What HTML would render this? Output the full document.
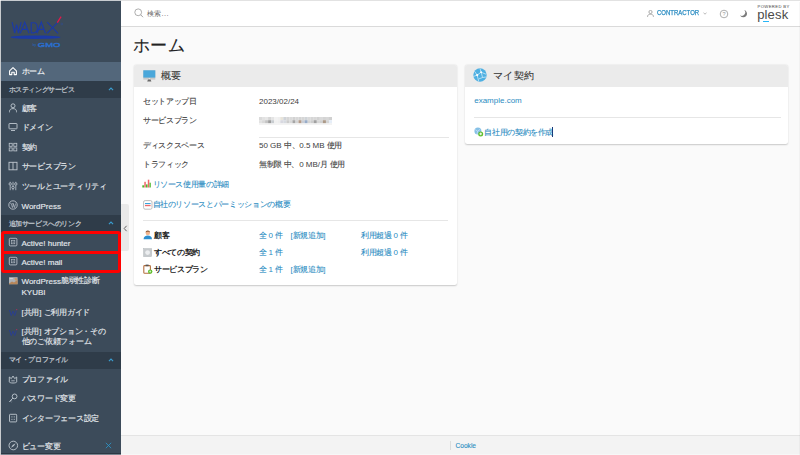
<!DOCTYPE html>
<html><head><meta charset="utf-8">
<style>
*{box-sizing:border-box;margin:0;padding:0}
html,body{width:800px;height:455px;overflow:hidden;background:#cbcbcb;font-family:"Liberation Sans",sans-serif}
.abs{position:absolute;white-space:nowrap}
#frame{position:absolute;left:1px;top:1px;width:799px;height:454px;background:#fafafa;overflow:hidden}
#side{position:absolute;left:0;top:0;width:120px;height:454px;background:#3c4b5a;color:#e6eaee}
.it{position:absolute;left:0;width:120px;height:19.4px;font-size:8px;letter-spacing:-0.25px;line-height:21px;padding-left:20.5px;color:#e4e8ec;-webkit-text-stroke:0.15px #e4e8ec}
.it .la{font-size:8px;letter-spacing:0;position:relative;top:1px}
.it .br{font-size:8px;letter-spacing:0}
.it svg{position:absolute;left:6.9px;top:5.1px;width:10px;height:10px;overflow:visible}
.sec{position:absolute;left:0;width:120px;height:17px;background:#2f3c49;font-size:7px;letter-spacing:-0.4px;line-height:17px;padding-left:7.5px;color:#c6cdd4;-webkit-text-stroke:0.2px #c6cdd4}
.sec svg{position:absolute;left:106.6px;top:6px}
#hdr{position:absolute;left:120px;top:0;width:679px;height:26px;background:#fff;border-bottom:1px solid #dadada}
.card{position:absolute;background:#fff;border-radius:2.5px;box-shadow:0 0.6px 1.6px rgba(0,0,0,.2)}
.card .ch{position:absolute;left:0;top:0;right:0;height:22.5px;background:#ebebeb;border-radius:2.5px 2.5px 0 0}
.t{position:absolute;white-space:nowrap;font-size:8px;letter-spacing:-0.35px;line-height:10px;color:#404040;-webkit-text-stroke:0.1px #404040}
.t .la{font-size:8px;letter-spacing:0;-webkit-text-stroke:0}
.lnk{color:#2a8cc2;-webkit-text-stroke:0.1px #2a8cc2}
.b{font-weight:bold;color:#222;-webkit-text-stroke:0}
</style></head><body>
<div class="abs" style="left:0;top:0;width:800px;height:1px;background:#e2e2e2"></div>
<div class="abs" style="left:1px;top:0;width:120px;height:1px;background:#c8ccd0"></div>
<div class="abs" style="left:0;top:1px;width:1px;height:454px;background:#c8cbce"></div>
<div class="abs" style="left:0;top:0;width:1px;height:1px;background:#ececec"></div>
<div id="frame">
  <div id="side">
    <!-- logo -->
    <svg class="abs" style="left:8px;top:14px" width="56" height="34" viewBox="0 0 56 34">
      <g fill="none" stroke="#1c3aa6" stroke-width="1.15" stroke-linejoin="miter">
        <path d="M3.1 7.2 5.7 18.2 7.6 9.6 9.5 18.2 12.1 7.2"/>
        <path d="M11.3 18.3 15.7 7.2 20.1 18.3M13.1 14.4H18.3"/>
        <path d="M22.2 7.7V17.8H24.6C27.6 17.8 28.4 15.3 28.4 12.75S27.6 7.7 24.6 7.7Z"/>
        <path d="M28.1 18.3 32.3 7.2 36.5 18.3M29.9 14.4H34.8"/>
        <path d="M38.2 7.2 49 18.3M48.4 7.6 38 18.3"/>
      </g>
      <path d="M48.3 7.6 52.1 1.6" stroke="#e3174b" stroke-width="1.3"/>
      <circle cx="52.8" cy="9" r="0.9" fill="none" stroke="#2a4ab0" stroke-width="0.35"/>
      <ellipse cx="26.5" cy="22.2" rx="25" ry="1.8" fill="#1c3aa6"/>
      <text x="23.8" y="30.6" font-family="Liberation Sans" font-size="3.2" fill="#2367c8">by</text>
      <text x="28.8" y="31.6" font-family="Liberation Sans" font-size="6.2" fill="#2a6fd0" stroke="#2a6fd0" stroke-width="0.35" textLength="22.6" lengthAdjust="spacingAndGlyphs">GMO</text>
    </svg>
    <div class="it" style="top:61px;height:19px;line-height:20px;background:#53677b;color:#fff">ホーム
      <svg viewBox="0 0 10 10" style="top:4.3px"><path d="M1.6 4.8 5 1.6 8.4 4.8V8.6H6.2V6.2H3.8V8.6H1.6Z" fill="none" stroke="#fff" stroke-width="1.1" stroke-linejoin="round"/></svg></div>
    <div class="sec" style="top:80px">ホスティングサービス<svg width="6" height="4" viewBox="0 0 6 4"><path d="M0.9 3.1 3 1.1 5.1 3.1" fill="none" stroke="#3a9fd2" stroke-width="1.1"/></svg></div>
    <div class="it" style="top:97px">顧客
      <svg viewBox="0 0 10 10"><circle cx="5" cy="2.8" r="2" fill="none" stroke="#c0c8d0" stroke-width="0.9"/><path d="M1.5 9.3V8.4C1.5 6.6 3 5.6 5 5.6S8.5 6.6 8.5 8.4V9.3" fill="none" stroke="#c0c8d0" stroke-width="0.9"/></svg></div>
    <div class="it" style="top:116.4px">ドメイン
      <svg viewBox="0 0 10 10"><rect x="1" y="1.5" width="8" height="5.3" rx="0.5" fill="none" stroke="#c0c8d0" stroke-width="0.9"/><path d="M3 8.5H7" stroke="#c0c8d0" stroke-width="0.9"/></svg></div>
    <div class="it" style="top:135.8px">契約
      <svg viewBox="0 0 10 10"><g fill="none" stroke="#c0c8d0" stroke-width="0.8"><rect x="1.2" y="1.3" width="3" height="3"/><rect x="5.8" y="1.3" width="3" height="3"/><rect x="1.2" y="5.9" width="3" height="3"/><rect x="5.8" y="5.9" width="3" height="3"/></g></svg></div>
    <div class="it" style="top:155.2px">サービスプラン
      <svg viewBox="0 0 10 10"><g fill="none" stroke="#c0c8d0" stroke-width="0.9"><rect x="1" y="1.3" width="8" height="7.5"/><path d="M5 1.3V8.8"/></g></svg></div>
    <div class="it" style="top:174.6px">ツールとユーティリティ
      <svg viewBox="0 0 10 10"><g stroke="#c0c8d0" stroke-width="0.8"><path d="M2.2 4.3V9.2M2.2 0.8V1.8M5 0.8V5.2M5 7.8V9.2M7.8 4.3V9.2M7.8 0.8V1.8"/><circle cx="2.2" cy="3" r="1.2" fill="none"/><circle cx="5" cy="6.5" r="1.2" fill="none"/><circle cx="7.8" cy="3" r="1.2" fill="none"/></g></svg></div>
    <div class="it" style="top:194px"><span class="la">WordPress</span>
      <svg viewBox="0 0 10 10"><circle cx="5" cy="5" r="4.2" fill="none" stroke="#c0c8d0" stroke-width="0.85"/><path d="M2.3 3.6H3.3L4.4 7.6 5.3 5 4.8 3.6M4.3 3.6H5.6M5.3 3.6 6.4 7.6 7.5 4.2C7.7 3.7 7.6 3.6 7.4 3.5" fill="none" stroke="#c0c8d0" stroke-width="0.65"/></svg></div>
    <div class="sec" style="top:213.6px">追加サービスへのリンク<svg width="6" height="4" viewBox="0 0 6 4"><path d="M0.9 3.1 3 1.1 5.1 3.1" fill="none" stroke="#3a9fd2" stroke-width="1.1"/></svg></div>
    <div class="it" style="top:230.6px"><span class="la">Active! hunter</span>
      <svg viewBox="0 0 10 10"><rect x="1.3" y="1.3" width="7.6" height="7.6" rx="1" fill="none" stroke="#b8c0c8" stroke-width="0.9"/><rect x="3.4" y="3.4" width="3.4" height="3.4" fill="none" stroke="#b8c0c8" stroke-width="0.6"/><circle cx="5.1" cy="5.1" r="0.6" fill="#b8c0c8"/></svg></div>
    <div class="it" style="top:250px"><span class="la">Active! mail</span>
      <svg viewBox="0 0 10 10"><rect x="1.3" y="1.3" width="7.6" height="7.6" rx="1" fill="none" stroke="#b8c0c8" stroke-width="0.9"/><rect x="3.4" y="3.4" width="3.4" height="3.4" fill="none" stroke="#b8c0c8" stroke-width="0.6"/><circle cx="5.1" cy="5.1" r="0.6" fill="#b8c0c8"/></svg></div>
    <div class="it" style="top:269.4px;height:31.2px;line-height:10.4px;padding-top:6px"><span class="la">WordPress</span>脆弱性診断<br><span class="la">KYUBI</span>
      <svg viewBox="0 0 10 10" style="top:5.5px"><rect x="1" y="1.2" width="8.6" height="7" fill="#aeb3b8"/><path d="M1 7.6 4 5.6 6 6.6 9.6 3.8V8.2H1Z" fill="#b8875a"/><path d="M6.5 2 8.5 1.7 9.6 4.2 7 4.6Z" fill="#c49a6a"/><rect x="1.8" y="2.2" width="3" height="0.8" fill="#d6d9dc"/></svg></div>
    <div class="it" style="top:300.6px"><span class="br">[</span>共用<span class="br">]&nbsp;</span>ご利用ガイド
      <svg viewBox="0 0 10 10"><path d="M1.5 3 3.2 8.6 5 4.2 6.8 8.6 8.3 3.4" fill="none" stroke="#2a3f8e" stroke-width="1"/><circle cx="8.7" cy="2.6" r="0.7" fill="#a8305a"/></svg></div>
    <div class="it" style="top:320px;height:31.2px;line-height:10.4px;padding-top:6px"><span class="br">[</span>共用<span class="br">]&nbsp;</span>オプション・その<br>他のご依頼フォーム
      <svg viewBox="0 0 10 10" style="top:6px"><path d="M1.5 3 3.2 8.6 5 4.2 6.8 8.6 8.3 3.4" fill="none" stroke="#2a3f8e" stroke-width="1"/><circle cx="8.7" cy="2.6" r="0.7" fill="#a8305a"/></svg></div>
    <div class="sec" style="top:351.2px;height:16.5px;line-height:16.5px">マイ・プロファイル<svg width="6" height="4" viewBox="0 0 6 4"><path d="M0.9 3.1 3 1.1 5.1 3.1" fill="none" stroke="#3a9fd2" stroke-width="1.1"/></svg></div>
    <div class="it" style="top:367.7px">プロファイル
      <svg viewBox="0 0 10 10"><path d="M1.3 3 3.3 4.6 5 2 6.7 4.6 8.7 3V7.8C8.7 8.6 7 9 5 9S1.3 8.6 1.3 7.8Z" fill="none" stroke="#c0c8d0" stroke-width="0.9" stroke-linejoin="round"/><path d="M3.3 6.8H6.7" stroke="#c0c8d0" stroke-width="0.8"/></svg></div>
    <div class="it" style="top:387.1px">パスワード変更
      <svg viewBox="0 0 10 10"><circle cx="6.6" cy="3.4" r="2.4" fill="none" stroke="#c0c8d0" stroke-width="0.9"/><path d="M4.9 5.1 1.2 8.8M2.2 7.8 3.3 8.9M3.2 6.8 4.1 7.7" fill="none" stroke="#c0c8d0" stroke-width="0.9"/></svg></div>
    <div class="it" style="top:406.5px">インターフェース設定
      <svg viewBox="0 0 10 10"><rect x="1.5" y="1.3" width="7.2" height="7.6" rx="0.8" fill="none" stroke="#c0c8d0" stroke-width="0.9"/><path d="M3.2 3.9H4.6M5.6 3.9H7M3.2 6.3H4.6M5.6 6.3H7" fill="none" stroke="#c0c8d0" stroke-width="0.75"/></svg></div>
    <div class="it" style="top:435px">ビュー変更
      <svg viewBox="0 0 10 10" style="top:4.2px"><circle cx="5.3" cy="5.5" r="4.3" fill="none" stroke="#c0c8d0" stroke-width="0.9"/><path d="M7.6 3.2 5.9 6.1 3 7.8 4.7 4.9Z" fill="#c0c8d0"/></svg>
      <svg viewBox="0 0 10 10" style="left:103.5px;top:6.2px;width:7px;height:7px"><path d="M1.2 1.2 8.8 8.8M8.8 1.2 1.2 8.8" stroke="#2a9bd2" stroke-width="1.1"/></svg></div>
    <div class="abs" style="left:0;top:452px;width:120px;height:1px;background:#2c3844"></div>
  </div>
  <!-- red highlight boxes -->
  <div class="abs" style="left:0.2px;top:229.9px;width:119.6px;height:22.8px;border:3px solid #f00;border-radius:3px"></div>
  <div class="abs" style="left:0.2px;top:249.6px;width:119.6px;height:22.6px;border:3px solid #f00;border-radius:3px"></div>

  <!-- collapse tab -->
  <div class="abs" style="left:120px;top:203px;width:8px;height:47px;background:#e9e9e9;border-radius:0 2px 2px 0"></div>
  <svg class="abs" style="left:122px;top:224px" width="5" height="7" viewBox="0 0 5 7"><path d="M3.6 0.8 1.2 3.5 3.6 6.2" fill="none" stroke="#555" stroke-width="0.9"/></svg>

  <!-- header -->
  <div id="hdr">
    <svg class="abs" style="left:13px;top:7px" width="10" height="10" viewBox="0 0 10 10"><circle cx="4.2" cy="4.3" r="3.4" fill="none" stroke="#999" stroke-width="0.8"/><path d="M6.7 6.8 9 9.2" stroke="#999" stroke-width="0.9"/></svg>
    <div class="abs" style="left:25.8px;top:7.8px;font-size:7.4px;letter-spacing:0.4px;line-height:10px;color:#6f6f6f">検索...</div>
    <svg class="abs" style="left:526px;top:9px" width="7" height="7" viewBox="0 0 7 7"><circle cx="3.5" cy="2" r="1.6" fill="none" stroke="#888" stroke-width="0.7"/><path d="M0.6 7V6.4C0.6 5 1.8 4.2 3.5 4.2S6.4 5 6.4 6.4V7" fill="none" stroke="#888" stroke-width="0.7"/></svg>
    <div class="abs" style="left:535.7px;top:8.2px;font-size:6.7px;line-height:8px;color:#2a8cc2;-webkit-text-stroke:0.25px #2a8cc2;transform:scaleX(0.895);transform-origin:0 0">CONTRACTOR</div>
    <svg class="abs" style="left:582px;top:11px" width="4" height="3" viewBox="0 0 4 3"><path d="M0.5 0.8 2 2.2 3.5 0.8" fill="none" stroke="#888" stroke-width="0.6"/></svg>
    <svg class="abs" style="left:598px;top:8px" width="10" height="10" viewBox="0 0 10 10"><circle cx="5" cy="5" r="3.8" fill="none" stroke="#999" stroke-width="0.8"/><text x="5" y="7" text-anchor="middle" font-family="Liberation Sans" font-size="5.5" fill="#999">?</text></svg>
    <svg class="abs" style="left:617.5px;top:7.5px" width="9" height="9" viewBox="0 0 9 9"><path d="M5.2 1A3.7 3.7 0 1 1 1 6.3 3.4 3.4 0 0 0 5.2 1Z" fill="#7a7a7a"/></svg>
    <div class="abs" style="left:636.5px;top:4px;font-size:4.2px;line-height:4px;letter-spacing:0.38px;color:#444">POWERED BY</div>
    <div class="abs" style="left:636.2px;top:5.3px;font-size:13px;line-height:18px;letter-spacing:0.15px;color:#4a4a4a">plesk</div>
    <div class="abs" style="left:642px;top:19.8px;width:6px;height:1.2px;background:#29b6f6"></div>
  </div>

  <!-- title -->
  <div class="abs" style="left:132px;top:34px;font-size:17px;letter-spacing:0.3px;line-height:22px;color:#222;-webkit-text-stroke:0.1px #222">ホーム</div>

  <!-- left card -->
  <div class="card" style="left:132.5px;top:63.7px;width:323.3px;height:220.3px">
    <div class="ch"></div>
    <svg class="abs" style="left:9.5px;top:5.5px" width="13" height="13" viewBox="0 0 13 13"><rect x="0.3" y="0.3" width="12" height="9.3" fill="#c9c9c9"/><rect x="0.3" y="0.3" width="12" height="7.3" fill="#4aa7da"/><circle cx="6.3" cy="8.6" r="0.5" fill="#eee"/><path d="M5 9.6H7.6L8.4 11.6H4.2Z" fill="#6a6a6a"/></svg>
    <div class="abs" style="left:27px;top:4px;font-size:10px;letter-spacing:0.5px;line-height:14px;color:#333;-webkit-text-stroke:0.1px #333">概要</div>

    <div class="t" style="left:9.5px;top:32px">セットアップ日</div>
    <div class="t" style="left:125.5px;top:32px"><span class="la">2023/02/24</span></div>
    <div class="t" style="left:9.5px;top:51.5px">サービスプラン</div>
    <svg class="abs" style="left:125.2px;top:52.2px;filter:blur(0.45px)" width="73" height="8" viewBox="0 0 73 8"><rect x="0.00" y="0" width="3.09" height="3.2" fill="#dadada"/><rect x="0.00" y="3.2" width="3.09" height="3.2" fill="#e2e2e2"/><rect x="3.04" y="0" width="3.09" height="3.2" fill="#e2e2e2"/><rect x="3.04" y="3.2" width="3.09" height="3.2" fill="#d8d8d8"/><rect x="6.08" y="0" width="3.09" height="3.2" fill="#e6e6e6"/><rect x="6.08" y="3.2" width="3.09" height="3.2" fill="#c4c4c4"/><rect x="9.12" y="0" width="3.09" height="3.2" fill="#d6d6d6"/><rect x="9.12" y="3.2" width="3.09" height="3.2" fill="#9c9c9c"/><rect x="12.17" y="0" width="3.09" height="3.2" fill="#e4e4e4"/><rect x="12.17" y="3.2" width="3.09" height="3.2" fill="#c8ccd0"/><rect x="15.21" y="0" width="3.09" height="3.2" fill="#f2f2f2"/><rect x="15.21" y="3.2" width="3.09" height="3.2" fill="#f0f0f0"/><rect x="18.25" y="0" width="3.09" height="3.2" fill="#efefef"/><rect x="18.25" y="3.2" width="3.09" height="3.2" fill="#eeeeee"/><rect x="21.29" y="0" width="3.09" height="3.2" fill="#e8e4da"/><rect x="21.29" y="3.2" width="3.09" height="3.2" fill="#d8d8e0"/><rect x="24.33" y="0" width="3.09" height="3.2" fill="#cfd3d8"/><rect x="24.33" y="3.2" width="3.09" height="3.2" fill="#d6dae0"/><rect x="27.38" y="0" width="3.09" height="3.2" fill="#d6d6d6"/><rect x="27.38" y="3.2" width="3.09" height="3.2" fill="#cccccc"/><rect x="30.42" y="0" width="3.09" height="3.2" fill="#dadada"/><rect x="30.42" y="3.2" width="3.09" height="3.2" fill="#d8d8d8"/><rect x="33.46" y="0" width="3.09" height="3.2" fill="#d2d2d2"/><rect x="33.46" y="3.2" width="3.09" height="3.2" fill="#a6a6a6"/><rect x="36.50" y="0" width="3.09" height="3.2" fill="#d8d8d8"/><rect x="36.50" y="3.2" width="3.09" height="3.2" fill="#d4d4d4"/><rect x="39.54" y="0" width="3.09" height="3.2" fill="#d4d4d4"/><rect x="39.54" y="3.2" width="3.09" height="3.2" fill="#b49c8a"/><rect x="42.58" y="0" width="3.09" height="3.2" fill="#d6d6d6"/><rect x="42.58" y="3.2" width="3.09" height="3.2" fill="#c8ccd4"/><rect x="45.62" y="0" width="3.09" height="3.2" fill="#d0d4d8"/><rect x="45.62" y="3.2" width="3.09" height="3.2" fill="#98acc8"/><rect x="48.67" y="0" width="3.09" height="3.2" fill="#dadada"/><rect x="48.67" y="3.2" width="3.09" height="3.2" fill="#d4d4d4"/><rect x="51.71" y="0" width="3.09" height="3.2" fill="#d6d6d6"/><rect x="51.71" y="3.2" width="3.09" height="3.2" fill="#cccccc"/><rect x="54.75" y="0" width="3.09" height="3.2" fill="#d8d8d8"/><rect x="54.75" y="3.2" width="3.09" height="3.2" fill="#a0a0a0"/><rect x="57.79" y="0" width="3.09" height="3.2" fill="#d2d2d2"/><rect x="57.79" y="3.2" width="3.09" height="3.2" fill="#d6d6d6"/><rect x="60.83" y="0" width="3.09" height="3.2" fill="#dadada"/><rect x="60.83" y="3.2" width="3.09" height="3.2" fill="#d0d0d0"/><rect x="63.88" y="0" width="3.09" height="3.2" fill="#d4d4d4"/><rect x="63.88" y="3.2" width="3.09" height="3.2" fill="#ac9a88"/><rect x="66.92" y="0" width="3.09" height="3.2" fill="#d8d8d8"/><rect x="66.92" y="3.2" width="3.09" height="3.2" fill="#d4d4d4"/><rect x="69.96" y="0" width="3.09" height="3.2" fill="#d0d0d0"/><rect x="69.96" y="3.2" width="3.09" height="3.2" fill="#e6eef8"/><rect x="0" y="6.4" width="73" height="1.4" fill="#f1f1f1"/></svg>
    <div class="abs" style="left:125.5px;top:72.5px;width:190px;height:1px;background:#e6e6e6"></div>
    <div class="t" style="left:9.5px;top:76.5px">ディスクスペース</div>
    <div class="t" style="left:125.5px;top:76.5px"><span class="la">50 GB </span>中、<span class="la">0.5 MB </span>使用</div>
    <div class="t" style="left:9.5px;top:95px">トラフィック</div>
    <div class="t" style="left:125.5px;top:95px">無制限 中、<span class="la">0 MB/</span>月 使用</div>

    <svg class="abs" style="left:8.6px;top:114.6px" width="10" height="10" viewBox="0 0 10 10"><rect x="0.3" y="6.3" width="1.8" height="2.2" fill="#4cb82e"/><rect x="2.3" y="2.8" width="1.5" height="5.7" fill="#ee6a6a"/><rect x="4" y="5.4" width="1.6" height="3.1" fill="#4cb82e"/><rect x="5.8" y="0.7" width="1.5" height="7.8" fill="#ee6a6a"/><rect x="7.5" y="3.7" width="1.3" height="4.8" fill="#4cb82e"/></svg>
    <div class="t lnk" style="left:19px;top:115.5px">リソース使用量の詳細</div>
    <svg class="abs" style="left:9.5px;top:135px" width="10" height="10" viewBox="0 0 10 10"><rect x="0.6" y="0.6" width="8.4" height="8.6" rx="1.5" fill="#fff" stroke="#b5b5b5" stroke-width="0.9"/><rect x="2" y="3" width="5.6" height="1.1" fill="#39a3dd"/><rect x="2" y="4.9" width="5.6" height="1.3" fill="#ee6a6a"/></svg>
    <div class="t lnk" style="left:19px;top:135px">自社のリソースとパーミッションの概要</div>
    <div class="abs" style="left:9.5px;top:155.5px;width:305px;height:1px;background:#e6e6e6"></div>

    <svg class="abs" style="left:9px;top:165.8px" width="10" height="10" viewBox="0 0 10 10"><circle cx="4.8" cy="2.9" r="2.2" fill="#f2b48c"/><path d="M4.8 0.6C3 0.6 2.6 1.8 2.7 2.6 3.4 1.6 6.2 1.6 6.9 2.6 7 1.8 6.6 0.6 4.8 0.6Z" fill="#8a5a3a"/><path d="M0.6 9.2C0.6 6.8 2.4 5.6 4.8 5.6S9 6.8 9 9.2Z" fill="#2c8fd0"/></svg>
    <div class="t b" style="left:20.5px;top:166px">顧客</div>
    <div class="t lnk" style="left:125.5px;top:166px">全 <span class="la">0</span> 件</div><div class="t lnk" style="left:157px;top:166px"><span class="la">[</span>新規追加<span class="la">]</span></div>
    <div class="t lnk" style="left:227.5px;top:166px">利用超過 <span class="la">0</span> 件</div>

    <svg class="abs" style="left:9px;top:183.3px" width="10" height="10" viewBox="0 0 10 10"><rect x="0.6" y="0.6" width="8" height="8" fill="#c6cacd" stroke="#b0b5ba" stroke-width="0.5"/><circle cx="4.6" cy="4.6" r="2.4" fill="#eceef0"/></svg>
    <div class="t b" style="left:20.5px;top:183.5px">すべての契約</div>
    <div class="t lnk" style="left:125.5px;top:183.5px">全 <span class="la">1</span> 件</div>
    <div class="t lnk" style="left:227.5px;top:183.5px">利用超過 <span class="la">0</span> 件</div>

    <svg class="abs" style="left:9px;top:199.3px" width="10" height="10" viewBox="0 0 10 10"><rect x="0.8" y="1.6" width="6.6" height="7.6" rx="0.8" fill="#fff" stroke="#b56f3e" stroke-width="1.1"/><rect x="2.6" y="0.6" width="3" height="1.6" fill="#555"/><circle cx="7.2" cy="7.6" r="2.2" fill="#5cbf2a"/><path d="M7.2 6.4V8.6M6.3 7.6H8.1" stroke="#fff" stroke-width="0.6"/></svg>
    <div class="t b" style="left:20.5px;top:200.5px">サービスプラン</div>
    <div class="t lnk" style="left:125.5px;top:200.5px">全 <span class="la">1</span> 件</div><div class="t lnk" style="left:157px;top:200.5px"><span class="la">[</span>新規追加<span class="la">]</span></div>
  </div>

  <!-- right card -->
  <div class="card" style="left:464.3px;top:63.7px;width:323.2px;height:79.3px">
    <div class="ch"></div>
    <svg class="abs" style="left:8.2px;top:3.8px" width="14" height="14" viewBox="0 0 14 14"><circle cx="7" cy="7" r="6.7" fill="#4fb0e2"/><g stroke="#eaf6fc" stroke-width="0.65" fill="none"><path d="M1.6 3.4 4.2 7.1 8.1 4.2 7 0.6M8.1 4.2 12.9 6.2M4.2 7.1 5.6 13.2M4.2 7.1 0.6 8.4M8.1 4.2 9.6 9.5 5.6 11M9.6 9.5 13 9"/></g><circle cx="4.2" cy="7.1" r="1.1" fill="#fff"/><circle cx="8.1" cy="4.2" r="0.9" fill="#fff"/></svg>
    <div class="abs" style="left:27.5px;top:4px;font-size:10px;letter-spacing:0.5px;line-height:14px;color:#333;-webkit-text-stroke:0.1px #333">マイ契約</div>
    <div class="t lnk" style="left:8.9px;top:31px"><span class="la">example.com</span></div>
    <div class="abs" style="left:8.3px;top:52.8px;width:307px;height:1px;background:#e6e6e6"></div>
    <svg class="abs" style="left:8.5px;top:62.8px" width="10" height="10" viewBox="0 0 10 10"><circle cx="3.9" cy="3.9" r="3.5" fill="#86c0e6"/><path d="M1.3 2.6 3.6 4.2 6.2 2.2M3.6 4.2 3 7.3" stroke="#e8f4fb" stroke-width="0.5" fill="none"/><circle cx="6.7" cy="6.9" r="2.5" fill="#5fbf2c"/><path d="M6.7 5.6V8.2M5.4 6.9H8" stroke="#fff" stroke-width="0.9"/></svg>
    <div class="t lnk" style="left:19px;top:63.5px">自社用の契約を作成</div>
    <div class="abs" style="left:86.8px;top:62.5px;width:0.8px;height:10px;background:#1a3a7a"></div>
  </div>

  <!-- footer -->
  <div class="abs" style="left:120px;top:433.5px;width:679px;height:21px;background:#f3f3f3;border-top:1px solid #e4e4e4"></div>
  <div class="abs" style="left:449.3px;top:440px;width:0.8px;height:8.5px;background:#dcdcdc"></div>
  <div class="abs lnk" style="left:454.5px;top:439.8px;font-size:6.6px;line-height:10px">Cookie</div>
  <div class="abs" style="left:0;top:453px;width:799px;height:1px;background:rgba(255,255,255,0.32)"></div>
  <div class="abs" style="left:798px;top:1px;width:1px;height:453px;background:rgba(0,0,0,0.03)"></div>
</div>
</body></html>
